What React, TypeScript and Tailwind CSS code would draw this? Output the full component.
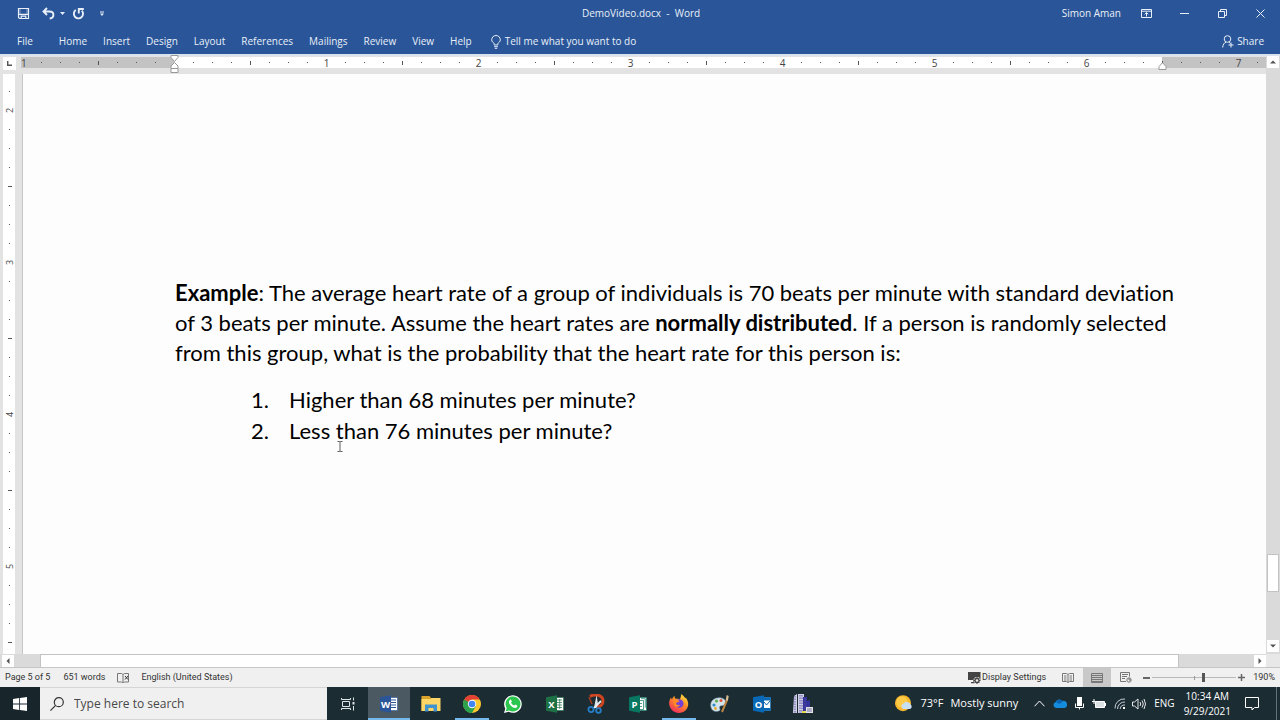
import React from 'react';

const ui = "font-['Open_Sans','Liberation_Sans',sans-serif]";

const tabs = ['Home', 'Insert', 'Design', 'Layout', 'References', 'Mailings', 'Review', 'View', 'Help'];

function rulerMark(step: number) {
  if (step % 8 === 0) return 'number';
  return step % 4 === 0 ? 'half' : 'dot';
}

function HorizontalRuler() {
  const steps = Array.from({ length: 65 }, (_, i) => i - 7);
  return (
    <div className="relative flex h-[11px] min-w-0 flex-1 overflow-hidden bg-[#c3c3c3]">
      <div className="absolute inset-y-0 left-[153px] w-[988px] bg-white" />
      <div className="relative flex h-full text-[10px] leading-none text-[#444]">
        <div className="flex w-[11px] shrink-0 items-center">1</div>
        {steps.map((s) => {
          const mark = s === 0 ? 'none' : rulerMark(s);
          return (
            <div key={s} className="flex w-[19px] shrink-0 items-center justify-center">
              {mark === 'number' && <span>{Math.abs(s / 8)}</span>}
              {mark === 'half' && <span className="h-1 w-px bg-[#555]" />}
              {mark === 'dot' && <span className="size-px bg-[#555]" />}
            </div>
          );
        })}
      </div>
    </div>
  );
}

function VerticalRuler() {
  const steps = Array.from({ length: 30 }, (_, i) => i + 15);
  return (
    <div className="w-[23px] shrink-0 border-r border-[#c6c6c6] bg-[#e3e3e3] pl-[3px]">
      <div className="h-full w-3 overflow-hidden bg-white pt-2">
        {steps.map((s) => {
          const mark = rulerMark(s);
          return (
            <div key={s} className="flex h-[19px] items-center justify-center pl-px text-[9px] leading-none text-[#444]">
              {mark === 'number' && <span className="-rotate-90">{s / 8}</span>}
              {mark === 'half' && <span className="h-px w-1 bg-[#555]" />}
              {mark === 'dot' && <span className="size-px bg-[#555]" />}
            </div>
          );
        })}
      </div>
    </div>
  );
}

function TitleBar() {
  return (
    <div className="flex h-[27px] items-center text-[10px] text-[#e9eff8]">
      <div className="flex flex-1 items-center pl-[17px]">
        <button aria-label="Save" className="mr-3">
          <svg className="block size-[13px]" viewBox="0 0 13 13" fill="none" stroke="currentColor" strokeWidth="1.2">
            <path d="M1.500 1.500h10v10h-9l-1-1z" />
            <path d="M1.500 7.300h10M4.200 11.500V9.200h4.600v2.300" />
            <path d="M3 1.800v5M10 1.800v5" strokeWidth=".5" />
          </svg>
        </button>
        <button aria-label="Undo" className="mr-[5px]">
          <svg className="block size-[13px]" viewBox="0 0 13 13" fill="none" stroke="currentColor" strokeWidth="1.900">
            <path d="M5 1 1.500 4.500 5 8M1.800 4.500h5.700c5 0 5.300 6.400.2 7" />
          </svg>
        </button>
        <button aria-label="Undo history" className="mr-[7px]">
          <svg className="block h-[6px] w-[5px]" viewBox="0 0 5 6"><path d="M0 1h5L2.500 4z" fill="currentColor" /></svg>
        </button>
        <button aria-label="Repeat" className="mr-[15px]">
          <svg className="block size-[13px]" viewBox="0 0 13 13" fill="none" stroke="currentColor" strokeWidth="1.900">
            <path d="M3.800 3A4.600 4.600 0 1 0 9.800 3.600" />
            <path d="M6.800 6.500V2h5" />
          </svg>
        </button>
        <button aria-label="Customize Quick Access Toolbar">
          <svg className="block h-[6px] w-[4px]" viewBox="0 0 5 6" fill="currentColor"><path d="M0 0h5v1H0zM0 2.500h5L2.500 5.500z" /></svg>
        </button>
      </div>
      <h1 className="whitespace-pre">DemoVideo.docx  -  Word</h1>
      <div className="flex flex-1 items-center justify-end pr-[15px]">
        <span className="mr-5">Simon Aman</span>
        <button aria-label="Ribbon display options" className="mr-[28px]">
          <svg className="block h-[9px] w-[11px]" viewBox="0 0 11 9" fill="none" stroke="currentColor"><path d="M.5.5h10v8H.5zM.5 2.200h10M5.500 7.500V3.700M3.700 5.300l1.800-1.800 1.800 1.800" /></svg>
        </button>
        <button aria-label="Minimize" className="mr-[29px]">
          <svg className="block size-[9px]" viewBox="0 0 9 9" stroke="currentColor"><path d="M0 4.500h9" /></svg>
        </button>
        <button aria-label="Restore" className="mr-[29px]">
          <svg className="block size-[9px]" viewBox="0 0 9 9" fill="none" stroke="currentColor"><path d="M.5 2.500h6v6h-6zM2.500 2.500v-2h6v6h-2" /></svg>
        </button>
        <button aria-label="Close">
          <svg className="block size-[9px]" viewBox="0 0 9 9" fill="none" stroke="currentColor"><path d="m.5.500 8 8m0-8-8 8" /></svg>
        </button>
      </div>
    </div>
  );
}

function RibbonTabs() {
  return (
    <nav className="flex h-[27px] items-center pt-[2px] pl-[17px] pr-4 text-[10px] text-[#e9eff8]">
      <button className="mr-[26px]">File</button>
      <div className="flex gap-4">
        {tabs.map((t) => (
          <button key={t}>{t}</button>
        ))}
      </div>
      <button className="ml-[19px] flex items-center gap-1">
        <svg className="h-[14px] w-[10px]" viewBox="0 0 10 14" fill="none" stroke="currentColor"><path d="M3.200 10V8.400C2 7.500.7 6.500.7 4.800a4.300 4.300 0 0 1 8.600 0C9.300 6.500 8 7.500 6.800 8.400V10zM3.200 11.700h3.600M3.800 13.300h2.400" /></svg>
        Tell me what you want to do
      </button>
      <button className="ml-auto flex items-center gap-[3px]">
        <svg className="h-[13px] w-3" viewBox="0 0 12 13" fill="none" stroke="currentColor"><circle cx="5.500" cy="4" r="3.300" /><path d="M.7 12.500c.2-3 1.500-4.700 3.300-5.300M7 7.200l1.500 1.400M9 7.500v5M6.500 10H11.500" /></svg>
        Share
      </button>
    </nav>
  );
}

function OfficeIcon({ letter, color, children }: { letter: string; color: string; children: React.ReactNode }) {
  return (
    <svg className="size-[18px]" viewBox="0 0 18 18">
      <path d="M9 2.500h8.500v13H9z" fill="#fff" stroke={color} strokeWidth=".6" />
      {children}
      <path d="M0 2.200 11 .3v17.400L0 15.800z" fill={color} />
      <text x="5.500" y="12.500" textAnchor="middle" fontSize="9.500" fontWeight="700" fill="#fff" fontFamily="Open Sans, sans-serif">{letter}</text>
    </svg>
  );
}

const apps: { name: string; state?: 'active' | 'open'; icon: React.ReactNode }[] = [
  {
    name: 'Task View',
    icon: (
      <svg className="size-[14px]" viewBox="0 0 14 14" fill="none" stroke="#dfe5e7"><path d="M1.500 4.500h7v5h-7zM.5 2.500V1M9.500 2.500V1M.5 2.500h9M.5 11.500h9M.5 11.500V13M9.500 11.500V13M12.500.5v3M12.500 9v4.500" /><path d="M11.500 5h2v2.500h-2z" fill="#dfe5e7" stroke="none" /></svg>
    ),
  },
  {
    name: 'Word',
    state: 'active',
    icon: <OfficeIcon letter="W" color="#2a5699"><path d="M11 5h5M11 7.500h5M11 10h5M11 12.500h5" stroke="#2a5699" /></OfficeIcon>,
  },
  {
    name: 'File Explorer',
    icon: (
      <svg className="h-[17px] w-5" viewBox="0 0 20 17"><path d="M.5 1h8l1.500 2h9v13H.5z" fill="#dca32c" /><path d="M.5 4h9l1.500-1h8.500v13H.5z" fill="#fbd667" /><path d="M4 16.500V9.500h12v7h-3.500V13h-5v3.500z" fill="#3f94cf" /></svg>
    ),
  },
  {
    name: 'Chrome',
    state: 'open',
    icon: (
      <svg className="size-[18px]" viewBox="0 0 18 18"><circle cx="9" cy="9" r="9" fill="#fbc92d" /><path d="M1.200 4.500A9 9 0 0 0 9 18l3.700-6.700L9 9z" fill="#2ba24c" /><path d="M1.200 4.500A9 9 0 0 1 16.800 4.500H9L5.200 11z" fill="#e34234" /><path d="M1.200 4.500 5 11.200 9 9z" fill="#2ba24c" /><circle cx="9" cy="9" r="4.200" fill="#fff" /><circle cx="9" cy="9" r="3.300" fill="#4285f4" /></svg>
    ),
  },
  {
    name: 'WhatsApp',
    icon: (
      <svg className="size-[18px]" viewBox="0 0 18 18"><path d="M0 18 1.300 13.500A8.800 8.800 0 1 1 4.700 16.800z" fill="#fff" /><path d="M1.800 16.300 2.700 13A7.500 7.500 0 1 1 5.200 15.400z" fill="#2cc64e" /><path d="M6 4.800c.5-.4 1-.2 1.200.3l.6 1.400c.1.500-.7 1-.7 1.300.7 1.500 1.700 2.300 3.100 2.800.4 0 .8-1 1.200-1l1.700.9c.8.5-.2 2-1.100 2.300-2.800.8-6.600-2.800-7-5.300-.1-1.100.3-2.100 1-2.700z" fill="#fff" /></svg>
    ),
  },
  {
    name: 'Excel',
    icon: <OfficeIcon letter="X" color="#1e7145"><path d="M11 5h5M11 7.500h5M11 10h5M11 12.500h5M13.700 4v10" stroke="#1e7145" strokeWidth=".7" /></OfficeIcon>,
  },
  {
    name: 'Snipping Tool',
    icon: (
      <svg className="h-5 w-[18px]" viewBox="0 0 18 20" fill="none"><path d="M3 2.500C8-.5 16 1 16 7c0 4-3 6-6 5.500" stroke="#cf4520" strokeWidth="3" /><path d="m2 3 3 7" stroke="#a93a1c" strokeWidth="1.500" /><path d="M9.500 1 11 10l-1.500 4H7z" fill="#dfe5e9" /><path d="M14 7l-7 7" stroke="#e8edf0" strokeWidth="1.800" /><circle cx="4" cy="15.500" r="2.600" stroke="#257fc7" strokeWidth="1.800" /><circle cx="11.500" cy="16.500" r="2.300" stroke="#257fc7" strokeWidth="1.800" /></svg>
    ),
  },
  {
    name: 'Publisher',
    icon: <OfficeIcon letter="P" color="#087761"><path d="M11 5.500h3.500v9H11M11 8.500h2M11 11.500h2M12 3.700h4.300v9" stroke="#087761" fill="none" strokeWidth=".7" /></OfficeIcon>,
  },
  {
    name: 'Firefox',
    state: 'open',
    icon: (
      <svg className="h-[19px] w-5" viewBox="0 0 20 19">
        <defs><linearGradient id="flame" x1=".9" y1="0" x2=".3" y2="1"><stop stopColor="#fff14a" /><stop offset=".45" stopColor="#ff9125" /><stop offset="1" stopColor="#f22d5e" /></linearGradient></defs>
        <path d="M12.500 0c1 1.500 3 2.500 4 4.500l.2-1C21 9 19 14 16.500 16.500c-4 3.600-11 3-14-1C-.5 12-.5 7 2 3.500l.8 2C3.500 4.200 4.500 2.500 5.500 2l.5 2.500 5 .5c.8-1.500 1-3.500 1.500-5z" fill="url(#flame)" />
        <circle cx="10.200" cy="9.500" r="4.300" fill="#7540d6" /><path d="M4.500 6.500C7 4.500 9.500 6 10.500 7.300c-1 1.200-3 .8-3.500 2 .5 2 2.500 2 4 1.500-1 2.500-4.500 3-6 .5z" fill="#ff8b24" />
      </svg>
    ),
  },
  {
    name: 'Paint',
    icon: (
      <svg className="size-5" viewBox="0 0 20 20"><path d="M1 13C-.5 7 5 3 11 4c5 1 6 5 3 7-2 1-4 0-4.500 2s2 3-1 4C5 18 1.800 17 1 13z" fill="#d5e5ee" stroke="#91afc0" strokeWidth=".6" /><circle cx="4" cy="11" r="1.600" fill="#2e8bc5" /><circle cx="6.500" cy="7" r="1.600" fill="#62ad4a" /><circle cx="11" cy="6.500" r="1.500" fill="#e1573a" /><circle cx="5.500" cy="14.500" r="1.400" fill="#e5a92f" /><path d="m12 18 5-12" stroke="#bd8540" strokeWidth="2" /><path d="m15.700 6 1-5 2 1-.8 5z" fill="#d9bd8e" /></svg>
    ),
  },
  {
    name: 'Outlook',
    icon: <OfficeIcon letter="O" color="#0768b5"><path d="M10 2.500h7.500v3H10zM10 13h7.500v2.500H10z" fill="#0768b5" /><path d="m11 7 2.500 3L17 6" stroke="#0768b5" fill="none" /></OfficeIcon>,
  },
  {
    name: 'Statistics',
    icon: (
      <svg className="size-5" viewBox="0 0 20 20"><path d="M1 2 4 0v19H0zM5 0h6v19H5z" fill="#d1d0e6" /><path d="M10 3h4v16h-4zM14 7l3-1v7h-3z" fill="#33339b" /><path d="M2 2v17M7 1v18M9 1v18M12 4v14" stroke="#5753a3" strokeDasharray="1.500 1" /><path d="M13 13h7v6h-7z" fill="#e4e4e8" /><path d="M14 15h5M14 17h5" stroke="#77779b" /><path d="M9 17h4v2H9z" fill="#e8dc4d" /></svg>
    ),
  },
];

function Taskbar() {
  return (
    <footer className="flex h-[33px] shrink-0 bg-[#1c2c33] text-white">
      <button aria-label="Start" className="flex w-10 shrink-0 items-center justify-center bg-[#18252b]">
        <svg className="size-[14px]" viewBox="0 0 14 14" fill="#fff"><path d="M0 2 6.200 1.100v5.500H0zM7 1l7-1v6.600H7zM0 7.400h6.200v5.500L0 12zM7 7.400h7V14l-7-1z" /></svg>
      </button>
      <label className="flex w-[287px] shrink-0 items-center gap-[10px] border-y border-[#d5d5d5] bg-[#f0f0f0] pl-[10px] text-[#444]">
        <svg className="size-[14px] shrink-0" viewBox="0 0 14 14" fill="none" stroke="#333" strokeWidth="1.200"><circle cx="8.800" cy="5.200" r="4.500" /><path d="M5.600 8.400.4 13.600" /></svg>
        <input aria-label="Type here to search" placeholder="Type here to search" className="w-full min-w-0 bg-transparent text-[12px] outline-none placeholder:text-[#484848]" />
      </label>
      <div className="grid w-[497px] shrink-0 grid-cols-12">
        {apps.map((a) => (
          <button key={a.name} aria-label={a.name} className={a.state === 'active' ? 'relative flex items-center justify-center bg-[#4b5a62]' : 'relative flex items-center justify-center'}>
            {a.icon}
            {a.state === 'active' && <span className="absolute inset-x-0 bottom-0 h-[2px] bg-[#76b9ed]" />}
            {a.state === 'open' && <span className="absolute inset-x-1 bottom-0 h-[2px] bg-[#76b9ed]" />}
          </button>
        ))}
      </div>
      <div className="ml-auto flex items-center text-[10px]">
        <button className="mr-4 flex items-center text-[11px]">
          <svg className="mr-2 h-[17px] w-[18px]" viewBox="0 0 18 17"><circle cx="8" cy="8.200" r="8" fill="#f8b72d" /><circle cx="7" cy="7" r="5.500" fill="#ffd152" opacity=".7" /><path d="M8 14a3 3 0 0 1 .5-5.500 4 4 0 0 1 7 1A2.500 2.500 0 0 1 15 14z" fill="#c9dff1" /></svg>
          <span className="mr-[7px]">73°F</span>
          <span>Mostly sunny</span>
        </button>
        <button aria-label="Show hidden icons" className="mr-2">
          <svg className="block h-[7px] w-[11px]" viewBox="0 0 11 7" fill="none" stroke="#fff"><path d="m.5 6.300 5-5.300 5 5.300" /></svg>
        </button>
        <svg aria-label="OneDrive" className="mr-2 h-[9px] w-[14px]" viewBox="0 0 14 9"><path d="M3 9A3 3 0 0 1 2.500 3.200 4 4 0 0 1 9.500 2 3.500 3.500 0 0 1 11.500 9z" fill="#158bdc" /><path d="M3 3a4 4 0 0 1 7-.5L6.500 5z" fill="#0a62b3" /></svg>
        <svg aria-label="Microphone" className="mr-2 h-[13px] w-[9px]" viewBox="0 0 9 13" fill="none" stroke="#fff"><rect x="2.500" y=".5" width="4" height="8" fill="#fff" /><path d="M.5 6.500v4h8v-4M4.500 10.500v2" /></svg>
        <svg aria-label="Battery" className="mr-2 h-[10px] w-[14px]" viewBox="0 0 14 10" fill="none" stroke="#fff"><path d="M3.500 2.500h9v6h-9z" fill="#dce1e3" /><path d="M0 2.500h3.500M2 0v5M13.500 4v3" /></svg>
        <svg aria-label="Wi-Fi" className="mr-[6px] size-3" viewBox="0 0 12 12" fill="none" stroke="#c5cccf"><path d="M1 10.500A9 9 0 0 1 11 1M3.500 11A7 7 0 0 1 11 4M6.200 11A4.500 4.500 0 0 1 11 7" /><path d="M9 9h2v2H9z" fill="#fff" stroke="none" /></svg>
        <svg aria-label="Volume" className="mr-2 h-3 w-[14px]" viewBox="0 0 14 12" fill="none" stroke="#e4e8ea"><path d="M.5 4h2L6 1v10L2.500 8h-2zM8 4q1.500 2 0 4M10 2.500q2.700 3.500 0 7M12 1q3 5 0 10" /></svg>
        <span className="mr-[9px]">ENG</span>
        <div className="mr-[14px] text-center leading-[15px]"><div>10:34 AM</div><div>9/29/2021</div></div>
        <button aria-label="Notifications" className="mr-[17px]">
          <svg className="block size-[14px]" viewBox="0 0 14 14" fill="none" stroke="#fff"><path d="M.5.500h13v10h-4l-2.500 2.500v-2.500H.5z" /></svg>
        </button>
        <span className="mr-[3px] h-[33px] w-px bg-[#65747b]" />
      </div>
    </footer>
  );
}

function StatusBar() {
  return (
    <div className="flex h-[19px] shrink-0 items-center bg-[#f0f0f0] px-[5px] font-['Roboto','Liberation_Sans',sans-serif] text-[9px] text-[#333]">
      <span className="mr-[13px]">Page 5 of 5</span>
      <span className="mr-3">651 words</span>
      <svg className="mr-3 h-[10px] w-3" viewBox="0 0 12 10" fill="none" stroke="#777"><path d="M.5.500h4L6 1.500 7.500.500h4v8.500h-4L6 10 4.500 9h-4zM6 1.500v8" /><path d="m8 3 3 3.500m0-3.500L8 6.500" stroke="#333" /></svg>
      <span>English (United States)</span>
      <button className="mr-4 ml-auto flex items-center gap-px">
        <svg className="h-3 w-[13px]" viewBox="0 0 13 12"><path d="M0 0h12.500v8H0zM3 10h4v1.200H3zM5 8h1.500v2H5z" fill="#444" /><circle cx="9" cy="8.500" r="3.500" fill="#f0f0f0" /><circle cx="9" cy="8.500" r="2" fill="none" stroke="#444" strokeWidth="1.300" /><path d="M9 5v1.500M9 10.500V12M5.500 8.500H7M11 8.500h1.500M6.500 6l1 1M10.500 10l1 1M11.500 6l-1 1M7.500 10l-1 1" stroke="#444" /></svg>
        Display Settings
      </button>
      <button aria-label="Read Mode" className="mr-[9px]"><svg className="block h-[10px] w-[12px]" viewBox="0 0 12 10" fill="none" stroke="#777"><path d="M.5.500h4L6 1.500 7.500.500h4v8h-4L6 9.500l-1.500-1h-4zM6 1.500v8M2 3h2.500M2 5h2.500M2 7h2.500M7.500 3H10M7.500 5H10M7.500 7H10" /></svg></button>
      <button aria-label="Print Layout" className="flex h-full w-7 items-center justify-center bg-[#c9c9c9]"><svg className="h-[10px] w-3" viewBox="0 0 12 10" fill="none" stroke="#777"><path d="M.5.500h11v9H.5zM1 2.500h10M1 4.500h10M1 6.500h10M1 8.500h10" /></svg></button>
      <button aria-label="Web Layout" className="mr-[11px] ml-[9px]"><svg className="block h-[11px] w-[12px]" viewBox="0 0 12 11" fill="none" stroke="#777"><path d="M6 9.500H.5v-9h9v4M2 2.500h6M2 4.500h5M2 6.500h3" /><circle cx="9" cy="8" r="2.200" /><path d="M8 7h2v2" /></svg></button>
      <button aria-label="Zoom out" className="h-[2px] w-[7px] bg-[#666]" />
      <div className="relative mx-[2px] flex h-3 w-[84px] items-center">
        <span className="h-px w-full bg-[#b8b8b8]" />
        <span className="absolute left-[42px] h-1 w-px bg-[#999]" />
        <input type="range" aria-label="Zoom" min={10} max={500} defaultValue={310} className="absolute inset-0 h-3 w-full appearance-none bg-transparent [&::-webkit-slider-thumb]:h-[9px] [&::-webkit-slider-thumb]:w-[3px] [&::-webkit-slider-thumb]:appearance-none [&::-webkit-slider-thumb]:bg-[#555]" />
      </div>
      <button aria-label="Zoom in"><svg className="block size-[7px]" viewBox="0 0 7 7" stroke="#666" strokeWidth="1.500"><path d="M0 3.500h7M3.500 0v7" /></svg></button>
      <span className="ml-2">190%</span>
    </div>
  );
}

function ScrollButton({ label, path }: { label: string; path: string }) {
  return (
    <button aria-label={label} className="flex size-3 shrink-0 items-center justify-center bg-white">
      <svg className="size-[6px]" viewBox="0 0 6 6" fill="#555"><path d={path} /></svg>
    </button>
  );
}

export default function App() {
  return (
    <div className={`flex min-h-screen flex-col overflow-hidden whitespace-nowrap bg-[#e3e3e3] ${ui}`}>
      <header className="shrink-0 bg-[#2a5699]">
        <TitleBar />
        <RibbonTabs />
      </header>

      <div className="flex flex-1">
        <div className="flex min-w-0 flex-1 flex-col">
          <div className="relative flex h-5 shrink-0 items-start border-t-2 border-[#d9e3f0] pt-px">
            <div className="mr-[5px] ml-[3px] flex size-[13px] items-center justify-center bg-white">
              <svg className="size-[5px]" viewBox="0 0 5 5" fill="none" stroke="#555" strokeWidth="1.500"><path d="M.7 0v4.300H5" /></svg>
            </div>
            <HorizontalRuler />
            <svg className="absolute top-[-1px] left-[170px] h-[19px] w-[9px]" viewBox="0 0 9 19" fill="#fff" stroke="#999"><path d="M1 .5h7v2L4.500 6.500 1 2.500zM4.500 7.500 8 11v2.500H1V11zM1 13.500h7v4H1z" /></svg>
            <svg className="absolute top-[6px] left-[1158px] h-[8px] w-[9px]" viewBox="0 0 9 8" fill="#fff" stroke="#999"><path d="M4.500.7 8 4.500v3H1v-3z" /></svg>
          </div>
          <div className="flex flex-1">
            <VerticalRuler />
            <main className="relative flex-1 bg-[#fdfdfd] pt-[204px] pl-[152px] font-['Lato','Liberation_Sans',sans-serif] text-[22px] leading-[30px] text-black [font-variant-ligatures:none]">
              <p>
                <b>Example</b>: The average heart rate of a group of individuals is 70 beats per minute with standard deviation<br />
                of 3 beats per minute. Assume the heart rates are <b>normally distributed</b>. If a person is randomly selected<br />
                from this group, what is the probability that the heart rate for this person is:
              </p>
              <ol className="mt-4 pl-[76px] leading-[31px]">
                <li className="flex"><span className="w-[38px]">1.</span>Higher than 68 minutes per minute?</li>
                <li className="flex"><span className="w-[38px]">2.</span>Less than 76 minutes per minute?</li>
              </ol>
              <svg className="absolute top-[367px] left-[314px] h-[11px] w-[6px]" viewBox="0 0 6 11" fill="none" stroke="#333"><path d="M.5.500h2l.5.500.5-.5h2M3 1v9M.5 10.500h2L3 10l.5.500h2" strokeWidth=".8" /></svg>
            </main>
          </div>
        </div>
        <div className="flex w-[14px] shrink-0 flex-col items-center border-t-2 border-[#d9e3f0] bg-[#dadada]">
          <ScrollButton label="Scroll up" path="M0 4.500h6l-3-3z" />
          <div className="flex-1" />
          <div className="mb-12 h-[38px] w-3 border border-[#c3c3c3] bg-white" />
          <ScrollButton label="Scroll down" path="M0 1.500h6l-3 3z" />
          <div className="h-[2px]" />
        </div>
      </div>

      <div className="flex h-[14px] shrink-0 items-center border-b border-[#c6c6c6] bg-[#dadada] pl-[2px]">
        <ScrollButton label="Scroll left" path="M4.500 0v6l-3-3z" />
        <div className="ml-[26px] h-full min-w-0 flex-1 border border-b-0 border-[#c3c3c3] bg-white" />
        <div className="w-[75px] shrink-0" />
        <ScrollButton label="Scroll right" path="M1.500 0v6l3-3z" />
        <div className="h-full w-[14px] shrink-0 bg-[#e8e8e8]" />
      </div>
      <StatusBar />
      <Taskbar />
    </div>
  );
}
